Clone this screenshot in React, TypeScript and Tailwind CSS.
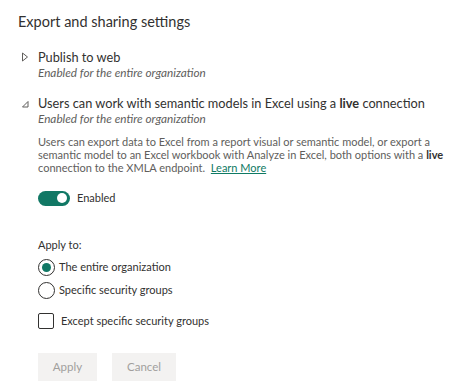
export default function App() {
    return (
        <div className="h-[390px] w-[474px] overflow-hidden bg-white font-['Segoe_UI','Lato',sans-serif] text-[#323130]">
            <h2 className="pl-[18px] pt-[12px] text-[14.5px] leading-[20px]">
                Export and sharing settings
            </h2>

            <div className="mt-[17px] flex pl-[20px]">
                <span className="w-[18px] pt-[2px]">
                    <svg width="10" height="12" viewBox="0 0 10 12">
                        <path d="M2.5 2 L7.5 6 L2.5 10 Z" fill="none" stroke="#605e5c" strokeWidth="1" strokeLinejoin="round" />
                    </svg>
                </span>
                <div>
                    <p className="text-[12.75px] leading-[16px]">Publish to web</p>
                    <p className="text-[11.75px] italic leading-[15px] text-[#605e5c]">
                        Enabled for the entire organization
                    </p>
                </div>
            </div>

            <div className="mt-[15px] flex pl-[20px]">
                <span className="w-[18px] pt-[3px]">
                    <svg width="10" height="12" viewBox="0 0 10 12">
                        <path d="M8 3.5 L8 9 L2.5 9 Z" fill="none" stroke="#605e5c" strokeWidth="1" strokeLinejoin="round" />
                    </svg>
                </span>
                <div>
                    <p className="whitespace-nowrap text-[12.75px] leading-[16px]">
                        Users can work with semantic models in Excel using a{" "}
                        <b className="font-bold">live</b> connection
                    </p>
                    <p className="text-[11.75px] italic leading-[15px] text-[#605e5c]">
                        Enabled for the entire organization
                    </p>
                    <p className="mt-[9px] whitespace-nowrap text-[11px] leading-[13px] text-[#605e5c]">
                        Users can export data to Excel from a report visual or semantic model, or export a
                        <br />
                        semantic model to an Excel workbook with Analyze in Excel, both options with a{" "}
                        <b className="font-bold text-[#323130]">live</b>
                        <br />
                        connection to the XMLA endpoint.{" "}
                        <a className="ml-[3px] text-[#0f7a64] underline">Learn More</a>
                    </p>

                    <div className="mt-[16px] flex items-center gap-[7px]">
                        <span className="relative h-[15px] w-[32px] rounded-full bg-[#117865]">
                            <span className="absolute right-[3px] top-[2.5px] h-[10px] w-[10px] rounded-full bg-white" />
                        </span>
                        <span className="text-[11px]">Enabled</span>
                    </div>

                    <p className="mt-[30px] text-[11px] leading-[16px]">Apply to:</p>

                    <div className="mt-[6px] flex items-center gap-[4px]">
                        <span className="flex h-[17px] w-[17px] items-center justify-center rounded-full border border-[#323130]">
                            <span className="h-[9px] w-[9px] rounded-full bg-[#117865]" />
                        </span>
                        <span className="text-[11px]">The entire organization</span>
                    </div>

                    <div className="mt-[6px] flex items-center gap-[4px]">
                        <span className="h-[17px] w-[17px] rounded-full border border-[#323130]" />
                        <span className="text-[11px]">Specific security groups</span>
                    </div>

                    <div className="mt-[14px] flex items-center gap-[7px]">
                        <span className="h-[16px] w-[16px] rounded-[2px] border border-[#323130]" />
                        <span className="text-[11px]">Except specific security groups</span>
                    </div>

                    <div className="mt-[24px] flex gap-[15px]">
                        <button className="h-[28px] w-[59px] bg-[#f3f2f1] text-[11.5px] text-[#a19f9d]">
                            Apply
                        </button>
                        <button className="h-[28px] w-[64px] bg-[#f3f2f1] text-[11.5px] text-[#a19f9d]">
                            Cancel
                        </button>
                    </div>
                </div>
            </div>
        </div>
    );
}
